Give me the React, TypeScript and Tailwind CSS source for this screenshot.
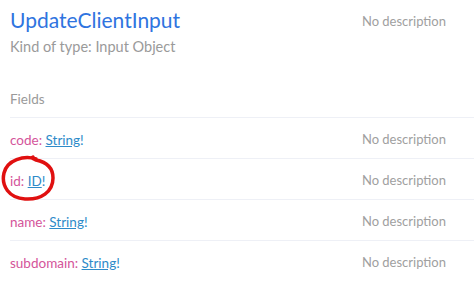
const fields = [
  { name: "code", type: "String" },
  { name: "id", type: "ID" },
  { name: "name", type: "String" },
  { name: "subdomain", type: "String" },
];

function FieldRow({ name, type }: { name: string; type: string }) {
  return (
    <div className="flex h-[41px] items-center justify-between border-t border-[#eef0f6] pr-[28px] pt-[3px]">
      <span className="text-[13.5px] text-[#d4549a]">
        {name}: <a className="text-[#2e8bc9] underline">{type}</a>
        <span className="text-[#2e8bc9]">!</span>
      </span>
      <span className="text-[13px] text-[#a0a0a0]">No description</span>
    </div>
  );
}

export default function App() {
  return (
    <div
      className="relative h-[296px] w-[474px] overflow-hidden bg-white pl-[10px]"
      style={{ fontFamily: 'Lato, "Open Sans", sans-serif' }}
    >
      <div className="flex items-start justify-between pr-[28px] pt-[6px]">
        <div>
          <h1 className="text-[21px] leading-[28px] text-[#2f74e0]">UpdateClientInput</h1>
          <p className="mt-[3px] text-[14.5px] leading-[20px] text-[#9a9a9a]">Kind of type: Input Object</p>
        </div>
        <span className="mt-[6px] text-[13px] text-[#a0a0a0]">No description</span>
      </div>
      <div className="mt-[32px] pb-[8px] text-[13.5px] text-[#9a9a9a]">Fields</div>
      <div>
        {fields.map((f) => (
          <FieldRow key={f.name} name={f.name} type={f.type} />
        ))}
      </div>
      <svg
        className="absolute left-0 top-[154px]"
        width="60"
        height="50"
        viewBox="0 0 60 50"
        fill="none"
      >
        <path
          d="M36 5 C24 1 7 6 4 19 C1 32 9 44 25 45 C41 46 53 38 53 24 C53 13 46 8 36 6 C33 5 31 4 33 3"
          stroke="#e01010"
          strokeWidth="3.5"
          strokeLinecap="round"
        />
      </svg>
    </div>
  );
}
